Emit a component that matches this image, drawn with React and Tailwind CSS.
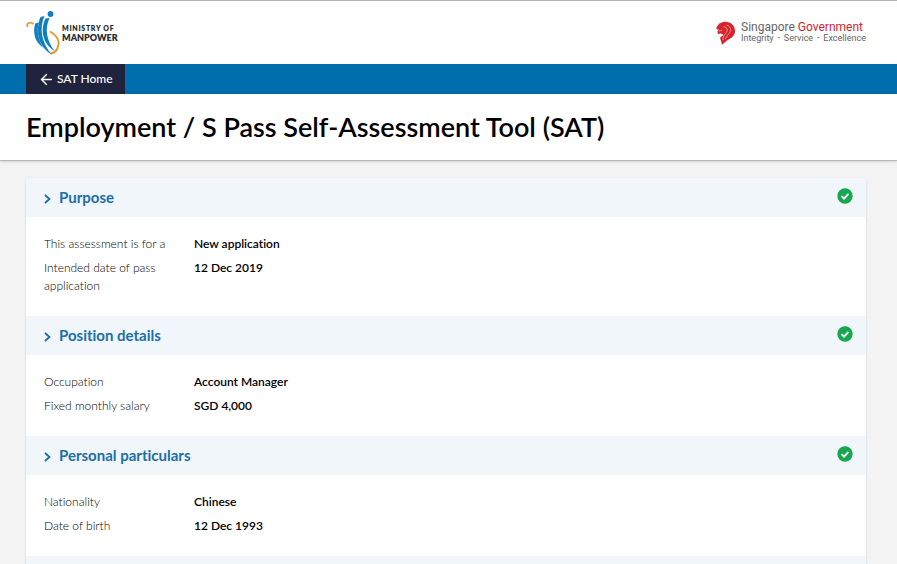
import { ArrowLeft } from 'lucide-react';

const sections = [
  {
    title: 'Purpose',
    rows: [
      { label: 'This assessment is for a', value: 'New application' },
      { label: 'Intended date of pass application', value: '12 Dec 2019' },
    ],
  },
  {
    title: 'Position details',
    rows: [
      { label: 'Occupation', value: 'Account Manager' },
      { label: 'Fixed monthly salary', value: 'SGD 4,000' },
    ],
  },
  {
    title: 'Personal particulars',
    rows: [
      { label: 'Nationality', value: 'Chinese' },
      { label: 'Date of birth', value: '12 Dec 1993' },
    ],
  },
];

function MomLogo() {
  return (
    <div className="flex items-center gap-[2px] text-[#2b2b2b]">
      <svg viewBox="0 0 34 44" className="w-[34px] h-[44px]" fill="none" aria-hidden="true">
        <path d="M1.500 16C0 12.500 4 10 7.500 13" stroke="#f0932b" strokeWidth="1.700" />
        <path d="M24 20.500C30 24 33.500 29 32.300 34C31.500 39 29 42 24.500 42.800" stroke="#f0932b" strokeWidth="1.900" />
        <path d="M9.200 12.500L12.700 11.500C10.500 20 12 28 17 36.500C9 31 6.500 22 9.200 12.500Z" fill="#0f7fbd" />
        <path d="M14.500 6L18.500 5C13 18 15.500 31 25.500 43.500C13 36 8.500 21 14.500 6Z" fill="#0f7fbd" />
        <path d="M19.500 7.500L23.500 7C18.500 18 20.500 29 28.500 40C17.500 33 13.500 20 19.500 7.500Z" fill="#0f7fbd" />
        <circle cx="24.500" cy="3" r="2.900" fill="#0f7fbd" />
      </svg>
      <div className="font-extrabold">
        <div className="text-[7px] leading-[9px] tracking-widest">MINISTRY OF</div>
        <div className="text-[9px] leading-[9px]">MANPOWER</div>
      </div>
    </div>
  );
}

function GovLogo() {
  return (
    <div className="flex items-center gap-[5px] font-[Roboto,sans-serif] text-[#666]">
      <svg viewBox="0 0 21 25" className="w-[20px] h-[24px]" fill="none" aria-hidden="true">
        <path d="M0.500 6.500L3.500 2.500L7.500 1C14 -0.500 20 4 20 10.500C20 16 15 18.500 12 20L6 25C6.500 22 4 20 4.500 17L8 14.500L5 13L2 13.500L1.500 11L3 9L0.500 8.500Z" fill="#d8232e" />
        <path d="M8 6C12 6 13 10 10 13C8 15.500 7 17.500 7.500 20M11 4C16 6 17 10 13 14C11.500 15.500 10.500 17 10 19M3 10.500L6.500 9.500" stroke="#fff" strokeWidth="0.500" />
      </svg>
      <div className="w-[125px]">
        <div className="text-[12px] leading-[12px] whitespace-nowrap">
          Singapore <span className="text-[#d8232e]">Government</span>
        </div>
        <div className="flex justify-between text-[9px] leading-[11px]">
          <span>Integrity</span>
          <span className="font-bold">·</span>
          <span>Service</span>
          <span className="font-bold">·</span>
          <span>Excellence</span>
        </div>
      </div>
    </div>
  );
}

function CheckBadge() {
  return (
    <svg viewBox="0 0 16 16" className="w-4 h-4" role="img" aria-label="Completed">
      <circle cx="8" cy="8" r="7.700" fill="#17a750" />
      <path d="M4.500 8.200L7 10.600L11.500 5.800" fill="none" stroke="#fff" strokeWidth="1.800" />
    </svg>
  );
}

function Section({ title, rows }) {
  return (
    <section>
      <div className="flex items-center justify-between h-[39px] pl-[18px] pr-[13px] pb-[3px] bg-[#f1f6fb]">
        <h2 className="pt-[2px]">
          <button type="button" className="flex items-center gap-2 text-[15px] leading-5 font-bold text-[#1a6fa8]">
            <svg viewBox="0 0 7 10" className="w-[7px] h-[10px] mt-[3px]" aria-hidden="true">
              <path d="M1 1L5.500 5L1 9" fill="none" stroke="currentColor" strokeWidth="1.800" />
            </svg>
            {title}
          </button>
        </h2>
        <CheckBadge />
      </div>
      <dl className="px-[18px] pt-[18px] pb-[15px] text-[12px] leading-[18px]">
        {rows.map((row) => (
          <div key={row.label} className="flex mb-[6px]">
            <dt className="w-[150px] pr-[18px] shrink-0 font-light text-black">{row.label}</dt>
            <dd className="font-semibold text-black">{row.value}</dd>
          </div>
        ))}
      </dl>
    </section>
  );
}

export default function App() {
  return (
    <div className="flex flex-col h-screen overflow-hidden bg-[#f3f3f3] font-['Lato',sans-serif] [font-variant-ligatures:none]">
      {/* Masthead */}
      <header className="flex items-center justify-between shrink-0 h-16 pl-[26px] pr-[31px] bg-white border-t border-[#b5b5b5]">
        <MomLogo />
        <GovLogo />
      </header>

      {/* Navigation */}
      <nav className="flex shrink-0 h-[30px] pl-[26px] bg-[#006eac]">
        <a href="#home" className="flex items-center gap-[2px] px-3 bg-[#20233e] text-[12px] font-medium text-white">
          <ArrowLeft size={17} />
          SAT Home
        </a>
      </nav>

      {/* Page title */}
      <div className="shrink-0 h-[67px] pl-[26px] pt-[15px] bg-white border-b border-[#b8b8b8] shadow-sm">
        <h1 className="text-[27px] leading-9 font-semibold text-black">Employment / S Pass Self-Assessment Tool (SAT)</h1>
      </div>

      {/* Summary */}
      <main className="shrink-0 mt-[17px] ml-[26px] mr-[31px] bg-white shadow-sm">
        {sections.map((section) => (
          <Section key={section.title} title={section.title} rows={section.rows} />
        ))}
        <div className="h-[39px] bg-[#f1f6fb]" />
      </main>
    </div>
  );
}
